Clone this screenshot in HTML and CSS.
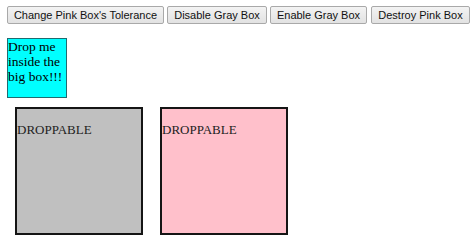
FILE: index.html
```html
<!DOCTYPE html>
<html>
<head>
<meta charset="utf-8">
<link rel="stylesheet" href="styles.css">
</head>
<body>
<div class="toolbar">
  <button class="btn btn-tolerance">Change Pink Box's Tolerance</button>
  <button class="btn btn-disable">Disable Gray Box</button>
  <button class="btn btn-enable">Enable Gray Box</button>
  <button class="btn btn-destroy">Destroy Pink Box</button>
</div>
<div class="draggable">Drop me inside the big box!!!</div>
<div class="targets">
  <div class="droppable gray"><p>DROPPABLE</p></div>
  <div class="droppable pink"><p>DROPPABLE</p></div>
</div>
</body>
</html>
```
FILE: styles.css
```css
html, body {
  margin: 0;
  padding: 0;
  background: #ffffff;
}
body {
  padding: 6px 0 0 7px;
  font-family: "Liberation Serif", "Times New Roman", serif;
  font-size: 13px;
  color: #000;
}
.toolbar {
  display: flex;
  gap: 3px;
  height: 18px;
}
.btn {
  box-sizing: border-box;
  height: 18px;
  margin: 0;
  padding: 0 5px;
  font-family: "Liberation Sans", Arial, sans-serif;
  font-size: 11px;
  line-height: 16px;
  color: #111;
  background: linear-gradient(#f3f3f3, #e2e2e2);
  border: 1px solid #a9a9a9;
  border-radius: 2px;
  white-space: nowrap;
}
.btn-tolerance { width: 157px; }
.btn-disable { width: 100px; }
.btn-enable { width: 97px; }
.btn-destroy { width: 99px; margin-left: 1px; }
.draggable {
  box-sizing: border-box;
  width: 60px;
  height: 60px;
  margin-top: 14px;
  background: #00ffff;
  border: 1px solid #1f6b70;
  font-size: 13.5px;
  line-height: 15px;
}
.targets {
  display: flex;
  gap: 17px;
  margin-top: 9px;
  padding-left: 8px;
}
.droppable {
  box-sizing: border-box;
  width: 128px;
  height: 128px;
  border: 2px solid #151515;
}
.droppable p {
  margin: 13px 0 0;
  line-height: 15px;
  color: #222;
}
.gray { background: #c0c0c0; }
.pink { background: #ffc0cb; }
```
